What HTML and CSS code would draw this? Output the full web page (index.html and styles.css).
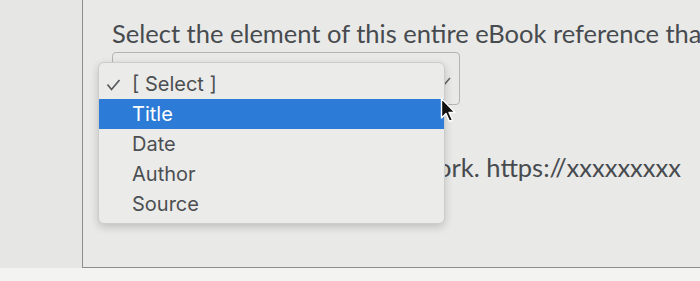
FILE: index.html
```html
<!DOCTYPE html>
<html>
<head>
  <title>eBook reference question</title>
  <meta name="viewport" content="width=device-width, initial-scale=1">
  <link rel="stylesheet" href="styles.css">
</head>
<body>
  <div class="page">
    <div class="gutter"></div>
    <div class="question">
      <h2 class="prompt">Select the element of this entire eBook reference that</h2>

      <div class="select-box">
        <svg class="select-check" width="11" height="9" viewBox="0 0 11 9">
          <path d="M1 5 L4 8 L10 1" fill="none" stroke="#5f6266" stroke-width="1.5"/>
        </svg>
      </div>

      <p class="answer">Cite the source used in the work. https://xxxxxxxxx</p>

      <!-- open dropdown menu, drawn over the question -->
      <ul class="menu">
        <li class="menu-item">
          <svg class="tick" width="15" height="12" viewBox="0 0 15 12">
            <path d="M1.5 5.5 L5.5 10.5 L13.5 1" fill="none" stroke="#55585c" stroke-width="1.7"/>
          </svg>[ Select ]</li>
        <li class="menu-item active">Title</li>
        <li class="menu-item">Date</li>
        <li class="menu-item">Author</li>
        <li class="menu-item">Source</li>
      </ul>

      <svg class="cursor" width="18" height="28" viewBox="0 0 18 28">
        <path d="M1.5 1.5 L1.5 21 L6 16.5 L9.5 24.5 L12.5 23 L9 15.5 L15 15.5 Z" fill="#111" stroke="#fff" stroke-width="1.4" stroke-linejoin="round"/>
      </svg>
    </div>
  </div>
  <div class="footer"></div>
</body>
</html>
```

FILE: styles.css
```css
/* page frame */
body {
  margin: 0;
  background: #e9e9e7;
  font-family: Lato, "Open Sans", sans-serif;
  color: #474b4f;
  overflow: hidden;
}

.page {
  display: flex;
  height: 268px;
}

.gutter {
  width: 82px;
  background: #e6e6e4;
  border-right: 1px solid #8e8e8c;
}

.question {
  flex: 1;
  position: relative;
  padding: 18px 0 0 29px;
  border-bottom: 1px solid #8e8e8c;
  white-space: nowrap;
  overflow: hidden;
}

.footer {
  height: 13px;
  background: #f3f3f1;
}

/* question text */
.prompt {
  margin: 0;
  font-size: 25.5px;
  line-height: 30px;
  font-weight: normal;
}

/* closed select control */
.select-box {
  position: relative;
  width: 346px;
  height: 51px;
  margin-top: 4px;
  border: 1px solid #b4b4b2;
  border-radius: 4px;
}

.select-check {
  position: absolute;
  right: 8px;
  top: 24px;
}

.answer {
  margin: 47px 0 0 0;
  font-size: 25.5px;
  line-height: 30px;
}

/* dropdown menu */
.menu {
  position: absolute;
  left: 15px;
  top: 62px;
  width: 345px;
  margin: 0;
  padding: 6px 0 4px 0;
  list-style: none;
  background: #ebebe9;
  border: 1px solid #cdcdcb;
  border-radius: 6px;
  box-shadow: 0 3px 8px rgba(0, 0, 0, 0.18);
  font-family: Inter, "Noto Sans", sans-serif;
  font-size: 20px;
  color: #4c4f52;
}

.menu-item {
  position: relative;
  height: 30px;
  line-height: 30px;
  padding-left: 33px;
}

.menu-item.active {
  background: #2c7cd7;
  color: #fff;
}

.tick {
  position: absolute;
  left: 7px;
  top: 10px;
}

.cursor {
  position: absolute;
  left: 357px;
  top: 97px;
}
```
